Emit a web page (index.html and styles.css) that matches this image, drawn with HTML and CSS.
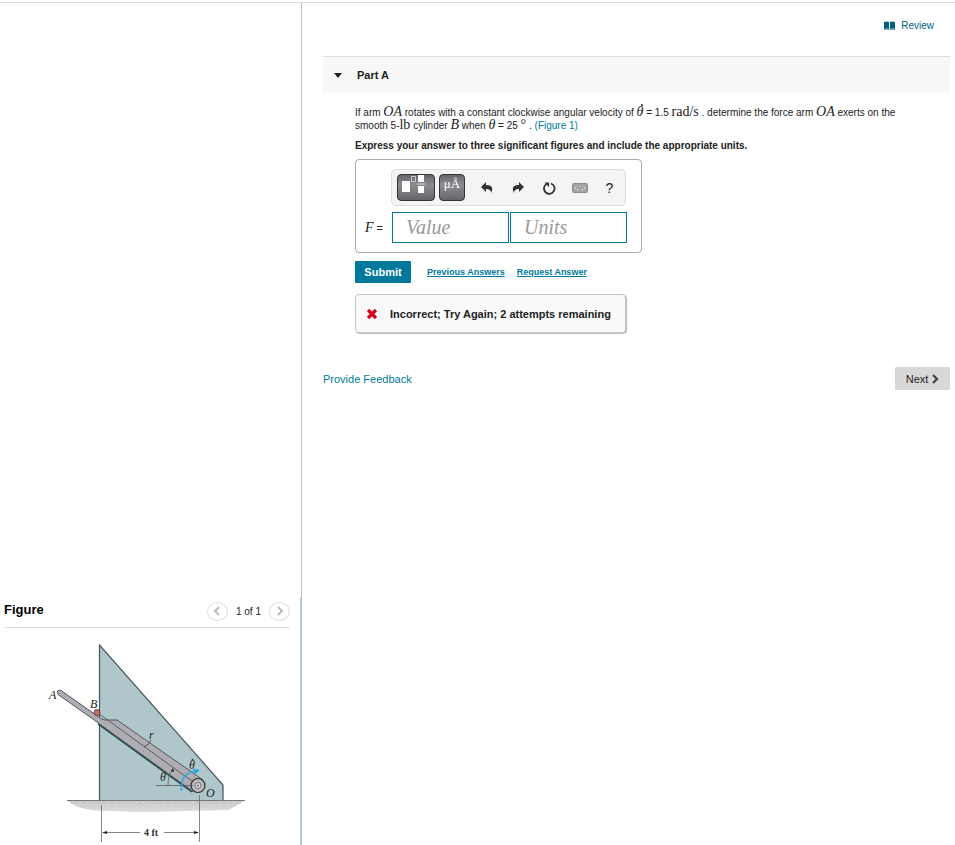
FILE: index.html
```html
<!DOCTYPE html>
<html lang="en">
<head>
    <meta charset="UTF-8">
    <meta name="viewport" content="width=device-width, initial-scale=1.0">
    <title>Part A</title>
    <link rel="stylesheet" href="styles.css">
</head>
<body>
    <div class="page">
        <!-- Figure pane -->
        <aside class="side">
            <section class="figure-panel">
                <div class="figure-header">
                    <h2>Figure</h2>
                    <div class="pager">
                        <button class="round-btn" aria-label="Previous figure">
                            <svg width="10" height="10" viewBox="0 0 10 10"><path d="M7 1 3 5l4 4"/></svg>
                        </button>
                        <span>1 of 1</span>
                        <button class="round-btn" aria-label="Next figure">
                            <svg width="10" height="10" viewBox="0 0 10 10"><path d="M3 1l4 4-4 4"/></svg>
                        </button>
                    </div>
                </div>
                <svg class="diagram" width="290" height="217" viewBox="0 628 290 217" role="img" aria-label="Arm OA rotating about O">
                    <defs>
                        <linearGradient id="ground" x1="0" y1="0" x2="0" y2="1">
                            <stop offset="0" stop-color="#c6c7c9"/>
                            <stop offset="1" stop-color="#dcddde"/>
                        </linearGradient>
                        <pattern id="grain" width="7" height="6" patternUnits="userSpaceOnUse">
                            <path d="M1 1h1M5 2h1M3 4h1" stroke="#e4e4e4"/>
                        </pattern>
                    </defs>
                    <!-- ground -->
                    <path d="M68 801H244Q236 806 228 810Q205 811 180 811Q140 813 115 811Q80 812 68 801Z" fill="url(#ground)"/>
                    <path d="M68 801H244Q236 806 228 810Q205 811 180 811Q140 813 115 811Q80 812 68 801Z" fill="url(#grain)"/>
                    <!-- plate -->
                    <path d="M100 645 223 785V801H100Z" fill="#afc7cb"/>
                    <path d="M99.500 801V645L223 785V801" fill="none" stroke="#45555a" stroke-width="1.2"/>
                    <path d="M67 800.5H245" stroke="#777"/>
                    <!-- arm -->
                    <path d="M98 724 192 792" fill="none" stroke="#1d4446" stroke-width="1.500"/>
                    <path d="M61 690.500 101 718.500Q104 720.500 108 720H117L203 780 193 791.500 97 722 58 694.500Q56 689 61 690.500Z" fill="#adadb3" stroke="#4a4a4e" stroke-width=".9"/>
                    <path d="M98 713 198 785.500" stroke="#48484c" stroke-width=".8"/>
                    <circle cx="198" cy="785.500" r="7" fill="#b9b9be" stroke="#2b2b2d" stroke-width="1.200"/>
                    <circle cx="198" cy="785.500" r="3" fill="#e2e2e4" stroke="#555" stroke-width=".8"/>
                    <circle cx="198" cy="785.500" r="1" fill="#555"/>
                    <circle cx="97" cy="712.500" r="3" fill="#c2706a" stroke="#63302d" stroke-width=".8"/>
                    <path d="M151 740Q150 744 144 747" fill="none" stroke="#333" stroke-width=".8"/>
                    <!-- angle and rotation -->
                    <path d="M156 785.500H193M168 785Q168 775 172 771" fill="none" stroke="#555" stroke-width=".8"/>
                    <path d="M171 771l2-3 1 4z" fill="#222"/>
                    <path d="M181.500 791Q180 774 194 771.500" fill="none" stroke="#27a9e1" stroke-width="1.500"/>
                    <path d="M193 768.500 200 770 195 774.500Z" fill="#27a9e1"/>
                    <!-- dimension -->
                    <path d="M101.500 805V842M199.500 795V842M104 832.500H140M164 832.500H197" stroke="#666" stroke-width=".8"/>
                    <path d="M102 832.500l5-1.500v3zM199 832.500l-5-1.500v3z" fill="#222"/>
                    <g class="diagram-label">
                        <text x="49" y="699">A</text>
                        <text x="90" y="708">B</text>
                        <text x="149" y="739">r</text>
                        <text x="189" y="769">θ</text>
                        <text x="160" y="781">θ</text>
                        <text x="206" y="797">O</text>
                    </g>
                    <circle cx="192.500" cy="759.500" r=".8" fill="#222"/>
                    <text class="dimension-label" x="144" y="836">4 ft</text>
                </svg>
            </section>
        </aside>

        <!-- Question -->
        <main class="main">
            <div class="top-bar">
                <a href="#" class="review">
                    <svg width="11" height="9" viewBox="0 0 11 9"><path d="M0 1Q3 0 5 1V8Q3 7 0 8ZM6 1Q8 0 11 1V8Q8 7 6 8Z" fill="#005f7c"/><path d="M0 8.500H11" stroke="#7fa9b8"/></svg>
                    Review
                </a>
            </div>

            <button class="part-header">
                <svg width="8" height="5" viewBox="0 0 8 5"><path d="M0 0h8L4 5z" fill="#222"/></svg>
                Part A
            </button>

            <div class="part-body">
                <p class="question">If arm <i class="math">OA</i> rotates with a constant clockwise angular velocity of <i class="math dotted">θ</i> = 1.5 <span class="math">rad/s</span> . determine the force arm <i class="math">OA</i> exerts on the smooth 5-<span class="math">lb</span> cylinder <i class="math">B</i> when <i class="math">θ</i> = 25 <span class="math">°</span> . <a href="#">(Figure 1)</a></p>
                <p class="instructions">Express your answer to three significant figures and include the appropriate units.</p>

                <div class="answer-box">
                    <div class="toolbar">
                        <button class="dark-btn template" aria-label="Templates">
                            <svg width="36" height="25" viewBox="1 1 36 25"><path d="M5 7h8v11H5zM21 1h6v7h-6zM21 12h6v7h-6z" fill="#fff"/><path d="M20 10h8" stroke="#ddd"/><path d="M14.500 2.500h4v5h-4z" fill="none" stroke="#ccc"/></svg>
                        </button>
                        <button class="dark-btn units">μÅ</button>
                        <button class="tool" aria-label="Undo">
                            <svg width="12" height="12" viewBox="0 0 12 12"><path d="M0 5 5 0V3Q14 3 10 11Q10 7 5 7V10Z" fill="#333"/></svg>
                        </button>
                        <button class="tool" aria-label="Redo">
                            <svg width="12" height="12" viewBox="0 0 12 12"><path d="M12 5 7 0V3Q-2 3 2 11Q2 7 7 7V10Z" fill="#333"/></svg>
                        </button>
                        <button class="tool" aria-label="Reset">
                            <svg width="14" height="14" viewBox="0 0 14 14"><path d="M9 2.500A5.300 5.300 0 1 1 4.500 3" fill="none" stroke="#333" stroke-width="1.800"/><path d="M2.500 1.500H7V6Z" fill="#333"/></svg>
                        </button>
                        <button class="tool" aria-label="Keyboard">
                            <svg width="16" height="10" viewBox="0 0 16 10"><rect x=".5" y=".5" width="15" height="9" rx="1" fill="#a4a4a4" stroke="#8c8c8c"/><path d="M2 3.500h12" stroke="#bbb" stroke-dasharray="1 1"/><path d="M3 5.500h1M12 5.500h1M5 6.500h1M10 6.500h1" stroke="#fff"/></svg>
                        </button>
                        <button class="tool help" aria-label="Help">?</button>
                    </div>
                    <div class="answer-row">
                        <label for="value"><i class="math">F</i> =</label>
                        <input type="text" id="value" placeholder="Value">
                        <input type="text" id="units" placeholder="Units" aria-label="Units">
                    </div>
                </div>

                <div class="actions">
                    <button class="submit">Submit</button>
                    <a href="#">Previous Answers</a>
                    <a href="#">Request Answer</a>
                </div>

                <div class="feedback">
                    <svg width="12" height="12" viewBox="0 0 12 12"><path d="M2 2l8 8M10 2l-8 8" stroke="#d0021b" stroke-width="3.200"/></svg>
                    Incorrect; Try Again; 2 attempts remaining
                </div>
            </div>

            <div class="footer">
                <a href="#">Provide Feedback</a>
                <button class="next">Next
                    <svg width="8" height="10" viewBox="0 0 8 10"><path d="M2 1l4 4-4 4" fill="none" stroke="#444" stroke-width="2.200"/></svg>
                </button>
            </div>
        </main>
    </div>
</body>
</html>
```

FILE: styles.css
```css
* {
    box-sizing: border-box;
}
body {
    margin: 0;
    padding-top: 2px;
    font-family: "Liberation Sans", Arial, sans-serif;
    font-size: 11px;
    color: #222;
    background: #fff;
}
button, input {
    font: inherit;
    color: inherit;
    margin: 0;
    padding: 0;
    border: none;
    background: none;
}
button {
    cursor: pointer;
}
a {
    color: #007a9c;
    text-decoration: none;
}
h2, p {
    margin: 0;
}
.page {
    display: flex;
    min-height: calc(100vh - 2px);
    border-top: 1px solid #ddd;
}

/* Figure pane */
.side {
    display: flex;
    flex-direction: column;
    justify-content: flex-end;
    width: 302px;
    flex-shrink: 0;
    border-right: 1px solid #b9c3cc;
}
.figure-panel {
    padding-right: 10px;
    border-right: 1px solid #b5cbe0;
}
.figure-header {
    display: flex;
    justify-content: space-between;
    align-items: center;
    height: 31px;
    margin-left: 4px;
    padding-bottom: 2px;
    border-bottom: 1px solid #ddd;
}
.figure-header h2 {
    font-size: 13px;
    color: #000;
    padding-bottom: 4px;
}
.pager {
    display: flex;
    align-items: center;
    gap: 8px;
    font-size: 10px;
}
.round-btn {
    display: flex;
    align-items: center;
    justify-content: center;
    width: 21px;
    height: 19px;
    border: 1px solid #ddd;
    border-radius: 50%;
}
.round-btn path {
    fill: none;
    stroke: #bbb;
    stroke-width: 2;
}
.diagram {
    display: block;
}
.diagram-label {
    font: italic 12px "Liberation Serif", serif;
    fill: #222;
}
.dimension-label {
    font: bold 10px "Liberation Serif", serif;
    fill: #333;
}

/* Question */
.main {
    flex: 1;
    padding: 0 5px 0 21px;
}
.top-bar {
    display: flex;
    justify-content: flex-end;
    height: 53px;
    padding: 16px 16px 0 0;
    font-size: 10px;
}
.review {
    display: flex;
    align-items: center;
    gap: 6px;
    height: 13px;
    color: #005f7c;
}
.part-header {
    display: flex;
    align-items: center;
    gap: 15px;
    width: 100%;
    height: 37px;
    padding-left: 11px;
    border-top: 1px solid #ddd;
    background: #f8f8f8;
    font-weight: bold;
}
.part-body {
    padding: 13px 28px 0 32px;
}
.question {
    font-size: 10px;
    line-height: 13px;
}
.math {
    font-family: "Liberation Serif", "Times New Roman", serif;
    font-size: 14px;
    line-height: 12px;
}
.dotted {
    position: relative;
}
.dotted::before {
    content: "";
    position: absolute;
    top: 0;
    left: 4px;
    width: 2px;
    height: 2px;
    border-radius: 50%;
    background: #222;
}
.instructions {
    margin-top: 7px;
    font-size: 10px;
    line-height: 13px;
    font-weight: bold;
}
.answer-box {
    width: fit-content;
    margin-top: 7px;
    padding: 9px 14px 9px 9px;
    border: 1px solid #aaa;
    border-radius: 4px;
}
.toolbar {
    display: flex;
    align-items: center;
    height: 37px;
    margin: 0 1px 6px 26px;
    padding-left: 5px;
    border: 1px solid #ddd;
    border-radius: 5px;
    background: #f4f4f4;
}
.dark-btn {
    height: 27px;
    border: 1px solid #333;
    border-radius: 4px;
    background: linear-gradient(#66666a, #8b8b90 40%, #66666a);
    color: #fff;
}
.template {
    display: flex;
    align-items: center;
    justify-content: center;
    width: 38px;
    margin-right: 4px;
}
.units {
    width: 26px;
    margin-right: 6px;
    padding-bottom: 8px;
    font: 13px "Liberation Serif", serif;
}
.tool {
    display: flex;
    align-items: center;
    justify-content: center;
    width: 31px;
    height: 27px;
}
.help {
    width: 29px;
    font-size: 14px;
}
.answer-row {
    display: flex;
    align-items: center;
    gap: 1px;
}
.answer-row label {
    width: 26px;
}
.answer-row input {
    width: 117px;
    height: 31px;
    padding: 0 13px;
    border: 1px solid #007a9c;
    font: italic 20px "Liberation Serif", serif;
}
.answer-row input::placeholder {
    color: #999;
    opacity: 1;
}
.actions {
    display: flex;
    align-items: center;
    gap: 12px;
    margin-top: 8px;
}
.actions a {
    font-size: 9px;
    font-weight: bold;
    text-decoration: underline;
}
.submit {
    width: 56px;
    height: 22px;
    margin-right: 4px;
    border-radius: 1px;
    background: #007a9c;
    color: #fff;
    font-weight: bold;
}
.feedback {
    display: flex;
    align-items: center;
    gap: 12px;
    width: fit-content;
    height: 39px;
    margin-top: 11px;
    padding: 0 14px 0 10px;
    border: 1px solid #c4c4c4;
    border-radius: 4px;
    background: #f9f9f9;
    box-shadow: 1px 1px 1px #bbb;
    font-weight: bold;
}
.footer {
    display: flex;
    justify-content: space-between;
    align-items: center;
    margin-top: 34px;
}
.next {
    display: flex;
    align-items: center;
    justify-content: center;
    gap: 3px;
    width: 55px;
    height: 23px;
    border-radius: 1px;
    background: #d8d8d8;
}
```
